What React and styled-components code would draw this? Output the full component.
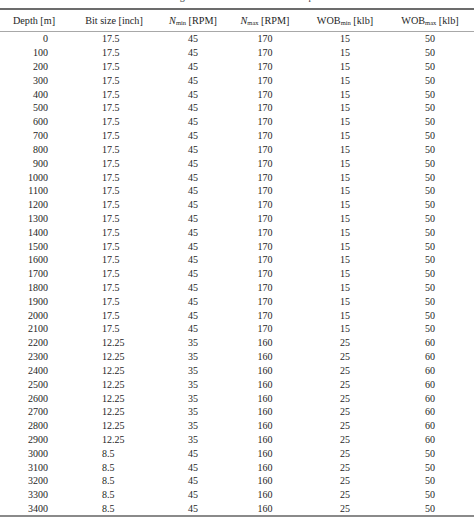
import React from 'react'
import styled, { createGlobalStyle } from 'styled-components'

const GlobalStyle = createGlobalStyle`
  html, body {
    margin: 0;
    padding: 0;
    background: #fff;
  }
  body {
    font-family: "Liberation Serif", "Times New Roman", serif;
    color: #1e1e1e;
  }
`

// depth, bit size, Nmin, Nmax, WOBmin, WOBmax
const sections = [
  { from: 0, to: 2100, bit: '17.5', nMin: 45, nMax: 170, wMin: 15, wMax: 50 },
  { from: 2200, to: 2900, bit: '12.25', nMin: 35, nMax: 160, wMin: 25, wMax: 60 },
  { from: 3000, to: 3400, bit: '8.5', nMin: 45, nMax: 160, wMin: 25, wMax: 50 },
]

const rows = sections.flatMap(s => {
  const out = []
  for (let d = s.from; d <= s.to; d += 100) {
    out.push([d, s.bit, s.nMin, s.nMax, s.wMin, s.wMax])
  }
  return out
})

const App = () => (
  <>
    <GlobalStyle />
    <Page>
      <Caption>
        <CaptionText>Table 1 Drilling rotation limits used at each step</CaptionText>
      </Caption>
      <Table>
        <HeaderRow>
          <Cell>Depth [m]</Cell>
          <Cell>Bit size [inch]</Cell>
          <Cell><Ital>N</Ital><Sub>min</Sub> [RPM]</Cell>
          <Cell><Ital>N</Ital><Sub>max</Sub> [RPM]</Cell>
          <Cell>WOB<Sub>min</Sub> [klb]</Cell>
          <Cell>WOB<Sub>max</Sub> [klb]</Cell>
        </HeaderRow>
        <Body>
          {rows.map(r => (
            <Row key={r[0]}>
              <DepthCell>{r[0]}</DepthCell>
              <BitCell>{r[1]}</BitCell>
              <Cell>{r[2]}</Cell>
              <Cell>{r[3]}</Cell>
              <Cell>{r[4]}</Cell>
              <Cell>{r[5]}</Cell>
            </Row>
          ))}
        </Body>
      </Table>
    </Page>
  </>
)

const Page = styled.div`
  width: 474px;
  height: 519px;
  overflow: hidden;
`

const Caption = styled.div`
  height: 8px;
  overflow: hidden;
  font-size: 10px;
  line-height: 12px;
  padding-left: 121px;
`

const CaptionText = styled.div`
  margin-top: -9.5px;
  white-space: nowrap;
  color: #444;
`

const Table = styled.div`
  border-top: 2px solid #6c6c6c;
  border-bottom: 2px solid #8a8a8a;
  font-size: 10px;
`

const cols = '68px 92px 66px 78px 82px 88px'

const HeaderRow = styled.div`
  display: grid;
  grid-template-columns: ${cols};
  height: 21px;
  align-items: center;
  border-bottom: 1px solid #a8a8a8;
  font-size: 10.2px;
`

const Body = styled.div`
  display: flex;
  flex-direction: column;
`

const Row = styled.div`
  display: grid;
  grid-template-columns: ${cols};
  height: 13.82px;
  align-items: center;
  line-height: 13px;
`

const Cell = styled.div`
  text-align: center;
  white-space: nowrap;
`

const DepthCell = styled(Cell)`
  text-align: right;
  padding-right: 20px;
`

const BitCell = styled(Cell)`
  text-align: left;
  padding-left: 34px;
`

const Ital = styled.i`
  font-style: italic;
`

const Sub = styled.sub`
  font-size: 6.5px;
  vertical-align: -1px;
  line-height: 0;
`

export default App
